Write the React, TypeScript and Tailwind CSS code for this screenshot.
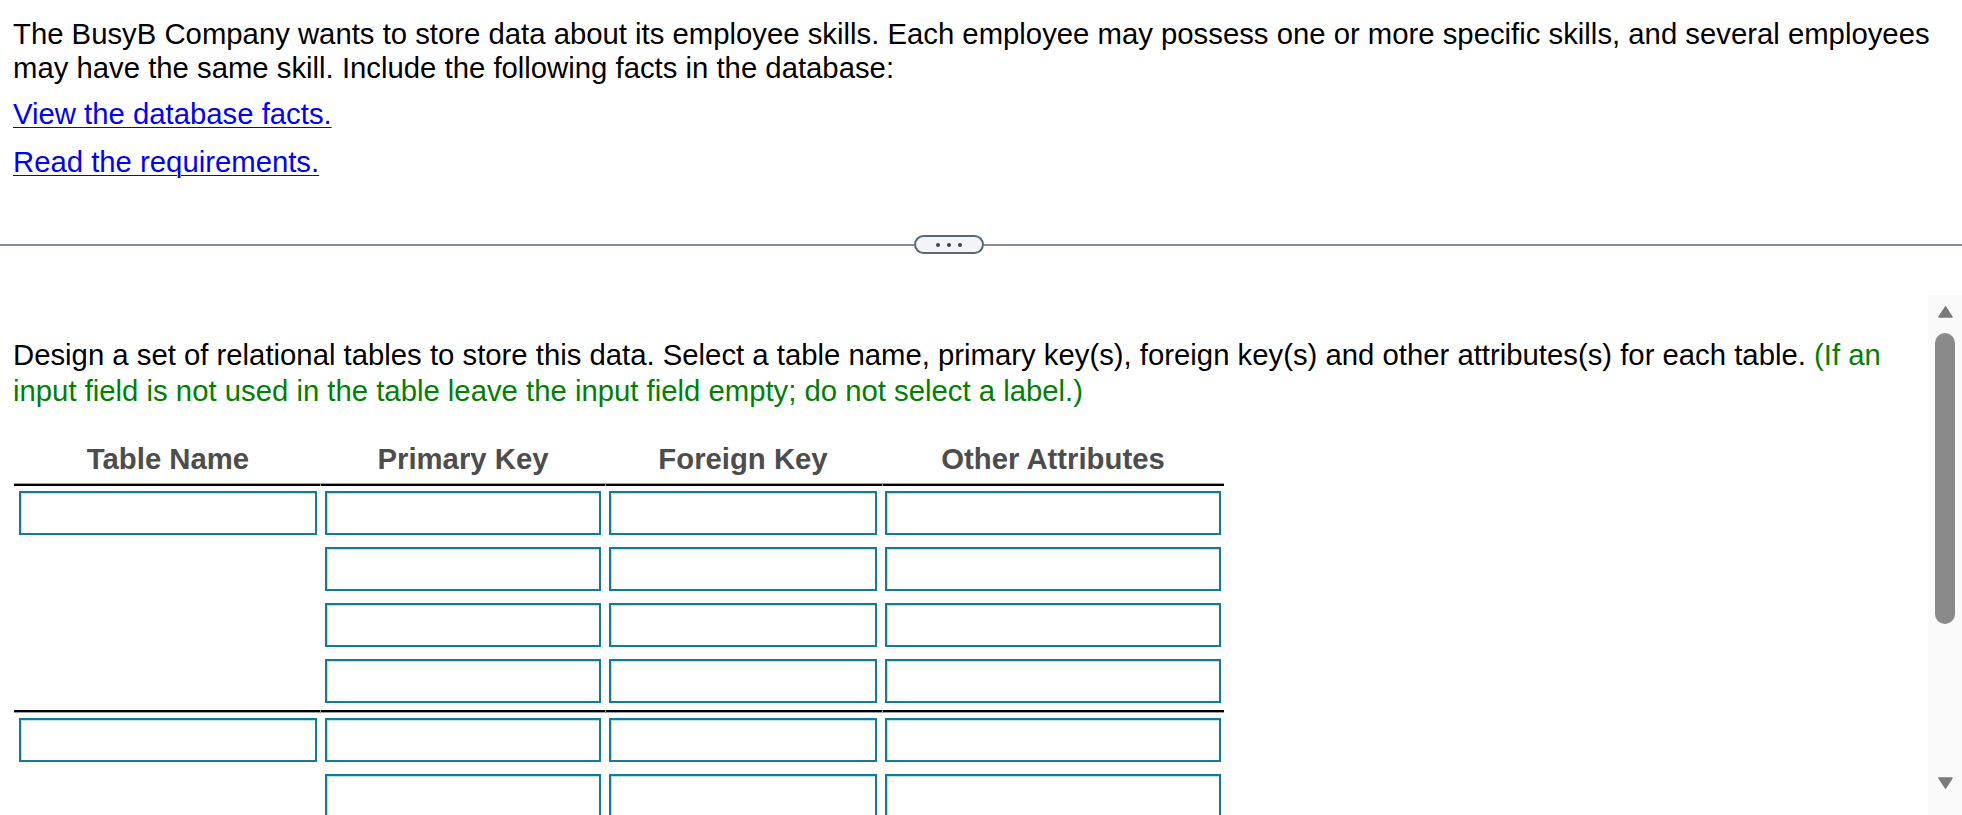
import React from "react";

const widths = ["w-[298px]", "w-[276px]", "w-[268px]", "w-[336px]"];
const headers = ["Table Name", "Primary Key", "Foreign Key", "Other Attributes"];

function Field({ w }: { w: string }) {
  return (
    <input
      type="text"
      className={`${w} h-[44px] bg-white border-2 border-[#117b9c] shadow-[inset_1px_1px_0_#bfe0ea] outline-none`}
    />
  );
}

function Rule({ greyTop }: { greyTop: boolean }) {
  const seg = greyTop
    ? "h-[3px] bg-black border-t border-[#a0a0a0]"
    : "h-[3px] bg-black border-b border-[#a0a0a0]";
  return (
    <div className="flex w-[1210px] gap-px bg-[#9a9a9a]">
      <div className={`w-[306px] ${seg}`} />
      <div className={`w-[284px] ${seg}`} />
      <div className={`w-[276px] ${seg}`} />
      <div className={`flex-1 ${seg}`} />
    </div>
  );
}

function Group() {
  return (
    <div className="flex flex-col gap-[12px] pt-[5px] pb-[7px] pl-[5px]">
      {[0, 1, 2, 3].map((r) => (
        <div key={r} className="flex gap-2">
          {r === 0 ? <Field w={widths[0]} /> : <div className={widths[0]} />}
          <Field w={widths[1]} />
          <Field w={widths[2]} />
          <Field w={widths[3]} />
        </div>
      ))}
    </div>
  );
}

export default function App() {
  return (
    <div className="w-[1962px] h-[815px] overflow-hidden bg-white text-black font-['Liberation_Sans',Arial,sans-serif] text-[29.3px]">
      {/* question text */}
      <div className="pt-[17px] pl-[13px] pr-[13px]">
        <p className="leading-[34px]">
          The BusyB Company wants to store data about its employee skills. Each employee may possess one or more
          specific skills, and several employees may have the same skill. Include the following facts in the database:
        </p>
        <p className="leading-[34px] mt-[12px]">
          <a href="#" className="text-[#0000ff] underline underline-offset-[3px] decoration-1">
            View the database facts.
          </a>
        </p>
        <p className="leading-[34px] mt-[14px]">
          <a href="#" className="text-[#0000ff] underline underline-offset-[3px] decoration-1">
            Read the requirements.
          </a>
        </p>
      </div>

      {/* splitter */}
      <div className="mt-[55px] flex items-center h-[21px]">
        <div className="w-[914px] h-[2px] bg-[#848e9c]" />
        <div className="w-[70px] h-[19px] rounded-full border-2 border-[#58687a] bg-[#f3f4f6] flex items-center justify-center gap-[7px]">
          <span className="w-1 h-1 rounded-full bg-[#444]" />
          <span className="w-1 h-1 rounded-full bg-[#444]" />
          <span className="w-1 h-1 rounded-full bg-[#444]" />
        </div>
        <div className="flex-1 h-[2px] bg-[#848e9c]" />
      </div>

      {/* answer pane */}
      <div className="mt-[40px] flex h-[520px]">
        <div className="flex-1 overflow-hidden pt-[42px] pl-[13px] pr-[13px]">
          <p className="leading-[36px]">
            Design a set of relational tables to store this data. Select a table name, primary key(s), foreign key(s)
            and other attributes(s) for each table.{" "}
            <span className="text-[#008000]">
              (If an input field is not used in the table leave the input field empty; do not select a label.)
            </span>
          </p>

          <div className="mt-[33px] ml-px w-[1210px]">
            <div className="flex gap-2 pl-[5px] pb-[7px]">
              {headers.map((h, i) => (
                <div key={h} className={`${widths[i]} text-center font-bold text-[#4d4d4d] leading-[34px]`}>
                  {h}
                </div>
              ))}
            </div>
            <Rule greyTop />
            <Group />
            <Rule greyTop={false} />
            <Group />
          </div>
        </div>

        {/* scrollbar */}
        <div className="w-[34px] bg-[#fafafa] flex flex-col items-center">
          <svg width="15" height="12" viewBox="0 0 15 12" className="mt-[11px]">
            <path d="M7.5 1 L14 11 L1 11 Z" fill="#7a7a7a" stroke="#7a7a7a" strokeWidth="1.5" strokeLinejoin="round" />
          </svg>
          <div className="mt-[15px] w-[20px] h-[291px] rounded-full bg-[#8a8a8a]" />
          <div className="flex-1" />
          <svg width="15" height="12" viewBox="0 0 15 12" className="mb-[26px]">
            <path d="M1 1 L14 1 L7.5 11 Z" fill="#7a7a7a" stroke="#7a7a7a" strokeWidth="1.5" strokeLinejoin="round" />
          </svg>
        </div>
      </div>
    </div>
  );
}
